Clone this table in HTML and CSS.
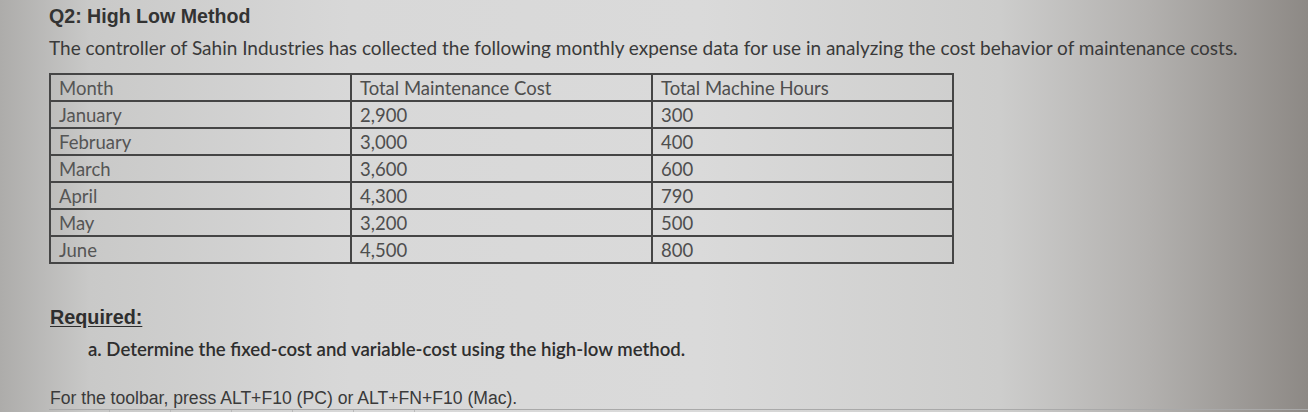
FILE: index.html
```html
<!DOCTYPE html>
<html lang="en">
<head>
<meta charset="utf-8">
<title>Q2: High Low Method</title>
<link rel="stylesheet" href="styles.css">
</head>
<body>
<main class="page">
  <h2 class="title">Q2: High Low Method</h2>
  <p class="intro">The controller of Sahin Industries has collected the following monthly expense data for use in analyzing the cost behavior of maintenance costs.</p>
  <table class="data">
    <tr><td>Month</td><td>Total Maintenance Cost</td><td>Total Machine Hours</td></tr>
    <tr><td>January</td><td>2,900</td><td>300</td></tr>
    <tr><td>February</td><td>3,000</td><td>400</td></tr>
    <tr><td>March</td><td>3,600</td><td>600</td></tr>
    <tr><td>April</td><td>4,300</td><td>790</td></tr>
    <tr><td>May</td><td>3,200</td><td>500</td></tr>
    <tr><td>June</td><td>4,500</td><td>800</td></tr>
  </table>
  <h3 class="required">Required:</h3>
  <p class="task">a. Determine the fixed-cost and variable-cost using the high-low method.</p>
  <p class="toolbar-hint">For the toolbar, press ALT+F10 (PC) or ALT+FN+F10 (Mac).</p>
  <div class="toolbar">
    <span class="tool"></span><span class="tool"></span><span class="tool"></span><span class="tool"></span><span class="tool"></span><span class="tool"></span>
  </div>
</main>
</body>
</html>
```
FILE: styles.css
```css
html, body {
  margin: 0;
  height: 100%;
}
body {
  width: 1308px;
  height: 412px;
  overflow: hidden;
  background: linear-gradient(90deg, #adacaa 0px, #c9c9c8 90px, #d8d8d8 350px, #dadada 700px, #cdcdcc 1000px, #b2b0ae 1150px, #8d8985 1308px);
  color: #3c3c3c;
}
.page {
  padding: 4px 0 0 49px;
  display: flex;
  flex-direction: column;
  align-items: flex-start;
}
.title {
  margin: 0;
  font: bold 19.6px/24px "Liberation Sans", Arial, sans-serif;
  color: #333;
}
.intro {
  margin: 8px 0 0 0;
  font: 19px/24px Lato, "Open Sans", sans-serif;
  color: #3a3a3a;
  white-space: nowrap;
}
.data {
  margin-top: 13px;
  border-collapse: collapse;
  border: 2px solid #3e3e3e;
  width: 905px;
  font: 18.5px/22px Lato, "Open Sans", sans-serif;
  color: #4e4e4e;
}
.data td {
  border: 2px solid #454545;
  height: 24px;
  padding: 1px 8px 0 8px;
  width: 33.3%;
  vertical-align: middle;
}
.data td:first-child {
  color: #555;
}
.required {
  margin: 41px 0 0 1px;
  font: bold 19.8px/24px "Liberation Sans", Arial, sans-serif;
  text-decoration: underline;
  text-underline-offset: 2px;
  color: #2e2e2e;
}
.task {
  margin: 8px 0 0 39px;
  font: 600 18.6px/24px Lato, "Open Sans", sans-serif;
  color: #2e2e2e;
}
.toolbar-hint {
  margin: 26px 0 0 1px;
  font: 17.6px/22px "Liberation Sans", Arial, sans-serif;
  color: #3a3a3a;
}
.toolbar {
  display: flex;
  margin-top: 0;
  border-top: 1px solid #a9a9a9;
  width: 1260px;
  height: 10px;
}
.tool {
  width: 60px;
  border-right: 1px solid #b8b8b8;
}
```
